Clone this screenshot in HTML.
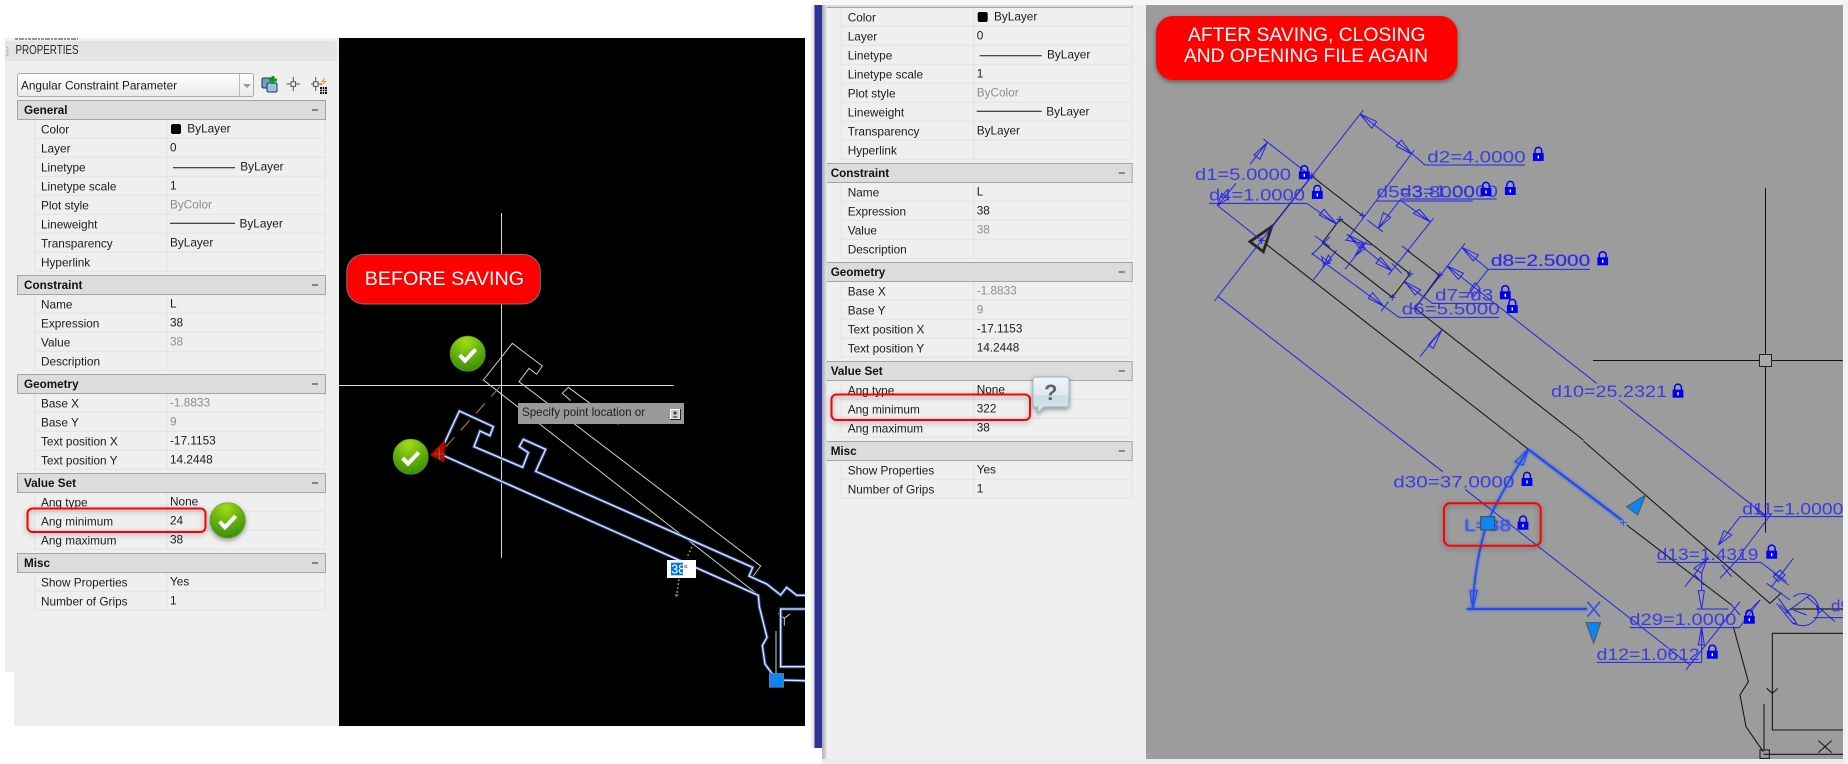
<!DOCTYPE html>
<html><head><meta charset="utf-8"><title>Before and after saving</title>
<style>
html,body{margin:0;padding:0;background:#fff;width:1848px;height:764px;overflow:hidden}
svg{display:block;position:absolute;left:0;top:0}
text{font-family:"Liberation Sans",sans-serif}
.l,.v{font-size:11.8px;fill:#1c1c1c}
.g{font-size:11.8px;fill:#8c8c8c}
.h{font-size:11.7px;font-weight:bold;fill:#111}
.t{font-size:17px;fill:#2b2bee;fill-opacity:.85}
.hd{fill:#dcdcdc;stroke:#a4a4a4;stroke-width:1}
.sep{stroke:#e2e2e2;stroke-width:1;fill:none}
.bl{fill:none;stroke:#2323e6;stroke-width:3}
.bk{fill:none;stroke:#151515;stroke-width:3.2}
</style></head><body>
<svg width="1848" height="764" viewBox="0 0 1848 764" xmlns="http://www.w3.org/2000/svg">
<defs>
<radialGradient id="gr" cx="45%" cy="15%" r="90%"><stop offset="0" stop-color="#a2dc14"/><stop offset=".55" stop-color="#5fae0c"/><stop offset="1" stop-color="#358a04"/></radialGradient>
<linearGradient id="cb" x1="0" y1="0" x2="0" y2="1"><stop offset="0" stop-color="#fff"/><stop offset="1" stop-color="#e9e9e9"/></linearGradient>
<linearGradient id="bb" x1="0" y1="0" x2="0" y2="1"><stop offset="0" stop-color="#eef4f8"/><stop offset=".5" stop-color="#dfe9ef"/><stop offset=".52" stop-color="#cadce6"/><stop offset="1" stop-color="#d8e6ee"/></linearGradient>
<linearGradient id="sl" x1="0" y1="0" x2="1" y2="0"><stop offset="0" stop-color="#a9a9a9"/><stop offset="1" stop-color="#efefef"/></linearGradient>
<linearGradient id="sr" x1="0" y1="0" x2="1" y2="0"><stop offset="0" stop-color="#fff"/><stop offset="1" stop-color="#d6d6d6"/></linearGradient>
<filter id="sh" x="-30%" y="-60%" width="160%" height="220%"><feDropShadow dx="0" dy="1.5" stdDeviation="3" flood-color="#000" flood-opacity=".38"/></filter>
<filter id="sh2" x="-30%" y="-30%" width="160%" height="170%"><feDropShadow dx="0" dy="2" stdDeviation="2.5" flood-color="#000" flood-opacity=".4"/></filter>
<filter id="gl" x="-20%" y="-20%" width="140%" height="140%"><feGaussianBlur stdDeviation="1.2" result="b"/><feMerge><feMergeNode in="b"/><feMergeNode in="SourceGraphic"/></feMerge></filter>
<filter id="bl1" x="-20%" y="-20%" width="140%" height="140%"><feGaussianBlur stdDeviation="1"/></filter>
<clipPath id="cpL"><rect x="339" y="38" width="466" height="688"/></clipPath>
<clipPath id="cpR"><rect x="826.7" y="5" width="320" height="754"/></clipPath>
<clipPath id="cpC"><rect x="1146" y="5" width="697" height="754"/></clipPath>
<g id="chk"><circle r="17.6" fill="url(#gr)" stroke="#5c9c1e" stroke-width=".6"/><path d="M-8,1.3 L-2.7,7 L8,-4.3" fill="none" stroke="#fff" stroke-width="4"/></g>
<g id="lk"><path d="M-3.4,-.5 V-3.2 A3.4,3.4 0 0 1 3.4,-3.2 V-.5" fill="none" stroke="#0000ee" stroke-width="1.5"/><rect x="-5.4" y="-1" width="10.8" height="8" fill="#0000ee"/><rect x="-.7" y="1.5" width="1.4" height="3" fill="#fff"/></g>
</defs>

<!-- LEFT PANEL -->
<rect x="5" y="38" width="334" height="634" fill="#efefef"/>
<rect x="14" y="672" width="325" height="54" fill="#efefef"/>
<path d="M5,41 H335 L337,44 V61 H5 Z" fill="#e4e4e4"/>
<line x1="15" x2="78" y1="39" y2="39" stroke="#777" stroke-width="1.5" stroke-dasharray="3 1 5 1 2 1"/>
<line x1="7.5" x2="7.5" y1="47" y2="56" stroke="#aaa" stroke-width="2" stroke-dasharray="1 1"/>
<text x="15.5" y="54" font-size="12.6" fill="#2c2c2c" textLength="63" lengthAdjust="spacingAndGlyphs">PROPERTIES</text>
<rect x="17.5" y="73.5" width="236" height="23" rx="2" fill="url(#cb)" stroke="#aaa"/>
<line x1="239.5" x2="239.5" y1="74" y2="96" stroke="#bbb"/>
<path d="M243,84 H251 L247,88 Z" fill="#999"/>
<text x="21" y="89.3" class="l">Angular Constraint Parameter</text>
<!-- toolbar icons -->
<rect x="262" y="78" width="10" height="10" rx="1.5" fill="#6f9fd2" stroke="#234" stroke-width="1"/>
<rect x="267" y="83" width="10" height="9" rx="1.5" fill="#9cc0e4" stroke="#234" stroke-width="1"/>
<path d="M273,76 V84 M269,80 H277" stroke="#0a9c1c" stroke-width="3"/>
<path d="M293.3,77 V91 M286.5,84 H300" stroke="#555" stroke-width="1"/><rect x="291" y="81.8" width="4.6" height="4.6" fill="#efefef" stroke="#555"/>
<path d="M315.7,77 V91 M311,84 H322" stroke="#555" stroke-width="1"/><rect x="313.4" y="81.8" width="4.6" height="4.6" fill="#efefef" stroke="#555"/>
<path d="M325,77 L321,82 H324 L321,86 L327,81 H324 Z" fill="#e9a020"/>
<rect x="320" y="87" width="7" height="7" fill="#111"/><path d="M320,89.3 H327 M320,91.6 H327 M322.3,87 V94 M324.6,87 V94" stroke="#efefef" stroke-width=".7"/>

<!-- left panel rows -->
<g>
<path class="sep" d="M34.7,120 V271.3 H325 V120 M167,120 V271.3 M34.7,138.3 H325 M34.7,157.3 H325 M34.7,176.3 H325 M34.7,195.3 H325 M34.7,214.3 H325 M34.7,233.3 H325 M34.7,252.3 H325"/>
<path class="sep" d="M34.7,294.3 V370.3 H325 V294.3 M167,294.3 V370.3 M34.7,313.3 H325 M34.7,332.3 H325 M34.7,351.3 H325"/>
<path class="sep" d="M34.7,393.3 V469.3 H325 V393.3 M167,393.3 V469.3 M34.7,412.3 H325 M34.7,431.3 H325 M34.7,450.3 H325"/>
<path class="sep" d="M34.7,492.3 V549.3 H325 V492.3 M167,492.3 V549.3 M34.7,511.3 H325 M34.7,530.3 H325"/>
<path class="sep" d="M34.7,572.3 V610.3 H325 V572.3 M167,572.3 V610.3 M34.7,591.3 H325"/>
<rect class="hd" x="17.5" y="100.5" width="308" height="19"/><rect class="hd" x="17.5" y="275.5" width="308" height="19"/><rect class="hd" x="17.5" y="374.5" width="308" height="19"/><rect class="hd" x="17.5" y="473.5" width="308" height="19"/><rect class="hd" x="17.5" y="553.5" width="308" height="19"/>
<path d="M312,110 h6 M312,285 h6 M312,384 h6 M312,483 h6 M312,563 h6" stroke="#666" stroke-width="1.6"/>
<text class="h" x="24" y="114">General</text><text class="h" x="24" y="289">Constraint</text><text class="h" x="24" y="388">Geometry</text><text class="h" x="24" y="487">Value Set</text><text class="h" x="24" y="567">Misc</text>
<text class="l" x="41" y="133.3">Color</text><text class="l" x="41" y="152.3">Layer</text><text class="l" x="41" y="171.3">Linetype</text><text class="l" x="41" y="190.3">Linetype scale</text><text class="l" x="41" y="209.3">Plot style</text><text class="l" x="41" y="228.3">Lineweight</text><text class="l" x="41" y="247.3">Transparency</text><text class="l" x="41" y="266.3">Hyperlink</text>
<rect x="171" y="124" width="10" height="10" rx="2" fill="#000"/>
<text class="v" x="187.3" y="132.7">ByLayer</text><text class="v" x="170" y="151.7">0</text><line x1="173" x2="235" y1="167.7" y2="167.7" stroke="#111"/><text class="v" x="240.3" y="170.7">ByLayer</text><text class="v" x="170" y="189.7">1</text><text class="g" x="170" y="208.7">ByColor</text><line x1="170" x2="235" y1="223.3" y2="223.3" stroke="#111"/><text class="v" x="239.5" y="227.7">ByLayer</text><text class="v" x="170" y="246.7">ByLayer</text>
<text class="l" x="41" y="308.3">Name</text><text class="l" x="41" y="327.3">Expression</text><text class="l" x="41" y="346.3">Value</text><text class="l" x="41" y="365.3">Description</text>
<text class="v" x="170" y="307.7">L</text><text class="v" x="170" y="326.7">38</text><text class="g" x="170" y="345.7">38</text>
<text class="l" x="41" y="407.3">Base X</text><text class="l" x="41" y="426.3">Base Y</text><text class="l" x="41" y="445.3">Text position X</text><text class="l" x="41" y="464.3">Text position Y</text>
<text class="g" x="170" y="406.7">-1.8833</text><text class="g" x="170" y="425.7">9</text><text class="v" x="170" y="444.7">-17.1153</text><text class="v" x="170" y="463.7">14.2448</text>
<text class="l" x="41" y="506.3">Ang type</text><text class="l" x="41" y="525.3">Ang minimum</text><text class="l" x="41" y="544.3">Ang maximum</text>
<text class="v" x="170" y="505.7">None</text><text class="v" x="170" y="524.7">24</text><text class="v" x="170" y="543.7">38</text>
<text class="l" x="41" y="586.3">Show Properties</text><text class="l" x="41" y="605.3">Number of Grips</text>
<text class="v" x="170" y="585.7">Yes</text><text class="v" x="170" y="604.7">1</text>
</g>
<rect x="27.5" y="508.5" width="178" height="23.5" rx="5" fill="none" stroke="#f00" stroke-width="2" filter="url(#sh)"/>
<use href="#chk" x="227.7" y="520.3" filter="url(#sh2)"/>

<!-- BLACK CANVAS -->
<rect x="339" y="38" width="466" height="688" fill="#000"/>
<g clip-path="url(#cpL)">
<line x1="501.5" x2="501.5" y1="213" y2="557.7" stroke="#ddd" stroke-width="1"/>
<line x1="339" x2="673.7" y1="385.5" y2="385.5" stroke="#ddd" stroke-width="1"/>
<g transform="translate(340,230) scale(.33333)">
<g fill="none" stroke="#cfcfcf" stroke-width="3">
<path d="M1255,1095 L430,450 L517,340 L607,408 L590,433 L567,415 L537,455 L1262,1008 L1240,1038"/>
<path d="M692,512 L667,490 L685,472 L835,583"/>
<path d="M1315,1150 L1333,1165 L1350,1152 M1333,1165 V1187 M1308,1203 V1330"/>
</g>
<g fill="none" stroke="#29488f" stroke-width="10" stroke-linejoin="miter">
<path d="M313,640 L358,543 L460,590 L450,617 L420,603 L402,650 L548,712 L565,668 L538,650 L550,628 L617,658 L587,724 L1238,1012 L1227,1038 L1280,1062 L1322,1095 L1340,1072 L1370,1096 L1395,1096"/>
<path d="M313,678 L1255,1096 L1258,1130 L1281,1222 L1267,1247 L1275,1302 L1310,1350 L1395,1352"/>
<path d="M1400,1137 H1322 V1310 H1400"/>
</g>
<g fill="none" stroke="#dfe7fb" stroke-width="4">
<path d="M313,640 L358,543 L460,590 L450,617 L420,603 L402,650 L548,712 L565,668 L538,650 L550,628 L617,658 L587,724 L1238,1012 L1227,1038 L1280,1062 L1322,1095 L1340,1072 L1370,1096 L1395,1096"/>
<path d="M313,678 L1255,1096 L1258,1130 L1281,1222 L1267,1247 L1275,1302 L1310,1350 L1395,1352"/>
<path d="M1400,1137 H1322 V1310 H1400"/>
</g>
<path d="M270,675 L315,630 L313,697 Z" fill="#c40000"/>
<path d="M480,470 L298,672" stroke="#c48a00" stroke-width="3" stroke-dasharray="40 28" fill="none"/>
<path d="M298,655 V690 M282,672 H316" stroke="#3f9a1c" stroke-width="2.5"/>
<rect x="1288" y="1330" width="43" height="42" fill="#0a86f5" stroke="#777" stroke-width="2"/>
<path d="M1060,940 L1040,985 M1017,1048 L1010,1096" stroke="#aaa" stroke-width="4" stroke-dasharray="5 7" fill="none"/>
<rect x="1005" y="1092" width="10" height="8" fill="#666"/>
</g>
<rect x="518" y="403" width="166" height="21" fill="#999"/>
<text x="522" y="416" font-size="11.6" fill="#222">Specify point location or</text>
<rect x="670.5" y="409.5" width="9.5" height="9.5" fill="#ccc" stroke="#fff"/><path d="M670,419.5 H680.5 V409" stroke="#224" fill="none"/><path d="M675,411 V415 M673,413 H677 M673,417 H677" stroke="#222" stroke-width="1"/>
<rect x="667" y="560" width="29" height="18" fill="#fff"/>
<rect x="671" y="562.7" width="12" height="12.6" fill="#0078d7"/>
<text x="671.3" y="573.5" font-size="12.5" fill="#fff">38</text>
<text x="683.5" y="573" font-size="11" fill="#e01040">°</text>
</g>
<use href="#chk" x="467.7" y="353.7"/>
<use href="#chk" x="410.7" y="456.7"/>
<rect x="346.8" y="254.5" width="193.5" height="49.5" rx="17" fill="#f00" stroke="#777" stroke-width="1"/>
<text x="364.7" y="285" font-size="19.7" fill="#fff">BEFORE SAVING</text>

<!-- RIGHT FRAME -->
<rect x="810" y="5" width="5" height="743" fill="url(#sr)"/>
<rect x="814.5" y="5" width="7.8" height="743" fill="#2f3596"/>
<rect x="822.3" y="5" width="324" height="754" fill="#efefef"/>
<rect x="822.3" y="5" width="5" height="754" fill="url(#sl)"/>
<rect x="822" y="759" width="1026" height="5" fill="#ececec"/>
<rect x="822" y="0" width="1026" height="5" fill="#f6f6f6"/>
<rect x="1843" y="0" width="5" height="764" fill="#f2f2f2"/>

<g clip-path="url(#cpR)"><g transform="translate(806.7,-112)">
<path class="sep" d="M34.7,120 V271.3 H325 V120 M167,120 V271.3 M34.7,138.3 H325 M34.7,157.3 H325 M34.7,176.3 H325 M34.7,195.3 H325 M34.7,214.3 H325 M34.7,233.3 H325 M34.7,252.3 H325"/>
<path class="sep" d="M34.7,294.3 V370.3 H325 V294.3 M167,294.3 V370.3 M34.7,313.3 H325 M34.7,332.3 H325 M34.7,351.3 H325"/>
<path class="sep" d="M34.7,393.3 V469.3 H325 V393.3 M167,393.3 V469.3 M34.7,412.3 H325 M34.7,431.3 H325 M34.7,450.3 H325"/>
<path class="sep" d="M34.7,492.3 V549.3 H325 V492.3 M167,492.3 V549.3 M34.7,511.3 H325 M34.7,530.3 H325"/>
<path class="sep" d="M34.7,572.3 V610.3 H325 V572.3 M167,572.3 V610.3 M34.7,591.3 H325"/>
<rect class="hd" x="17.5" y="100.5" width="308" height="19"/><rect class="hd" x="17.5" y="275.5" width="308" height="19"/><rect class="hd" x="17.5" y="374.5" width="308" height="19"/><rect class="hd" x="17.5" y="473.5" width="308" height="19"/><rect class="hd" x="17.5" y="553.5" width="308" height="19"/>
<path d="M312,285 h6 M312,384 h6 M312,483 h6 M312,563 h6" stroke="#666" stroke-width="1.6"/>
<text class="h" x="24" y="289">Constraint</text><text class="h" x="24" y="388">Geometry</text><text class="h" x="24" y="487">Value Set</text><text class="h" x="24" y="567">Misc</text>
<text class="l" x="41" y="133.3">Color</text><text class="l" x="41" y="152.3">Layer</text><text class="l" x="41" y="171.3">Linetype</text><text class="l" x="41" y="190.3">Linetype scale</text><text class="l" x="41" y="209.3">Plot style</text><text class="l" x="41" y="228.3">Lineweight</text><text class="l" x="41" y="247.3">Transparency</text><text class="l" x="41" y="266.3">Hyperlink</text>
<rect x="171" y="124" width="10" height="10" rx="2" fill="#000"/>
<text class="v" x="187.3" y="132.7">ByLayer</text><text class="v" x="170" y="151.7">0</text><line x1="173" x2="235" y1="167.7" y2="167.7" stroke="#111"/><text class="v" x="240.3" y="170.7">ByLayer</text><text class="v" x="170" y="189.7">1</text><text class="g" x="170" y="208.7">ByColor</text><line x1="170" x2="235" y1="223.3" y2="223.3" stroke="#111"/><text class="v" x="239.5" y="227.7">ByLayer</text><text class="v" x="170" y="246.7">ByLayer</text>
<text class="l" x="41" y="308.3">Name</text><text class="l" x="41" y="327.3">Expression</text><text class="l" x="41" y="346.3">Value</text><text class="l" x="41" y="365.3">Description</text>
<text class="v" x="170" y="307.7">L</text><text class="v" x="170" y="326.7">38</text><text class="g" x="170" y="345.7">38</text>
<text class="l" x="41" y="407.3">Base X</text><text class="l" x="41" y="426.3">Base Y</text><text class="l" x="41" y="445.3">Text position X</text><text class="l" x="41" y="464.3">Text position Y</text>
<text class="g" x="170" y="406.7">-1.8833</text><text class="g" x="170" y="425.7">9</text><text class="v" x="170" y="444.7">-17.1153</text><text class="v" x="170" y="463.7">14.2448</text>
<text class="l" x="41" y="506.3">Ang type</text><text class="l" x="41" y="525.3">Ang minimum</text><text class="l" x="41" y="544.3">Ang maximum</text>
<text class="v" x="170" y="505.7">None</text><text class="v" x="170" y="524.7">322</text><text class="v" x="170" y="543.7">38</text>
<text class="l" x="41" y="586.3">Show Properties</text><text class="l" x="41" y="605.3">Number of Grips</text>
<text class="v" x="170" y="585.7">Yes</text><text class="v" x="170" y="604.7">1</text>
</g></g>
<rect x="831.5" y="394.5" width="198.5" height="25.5" rx="5" fill="none" stroke="#f00" stroke-width="2" filter="url(#sh)"/>
<path d="M1036,377 H1066 Q1069,377 1069,380 V404 Q1069,407 1066,407 H1044 L1037.5,413 L1038,407 H1036 Q1033,407 1033,404 V380 Q1033,377 1036,377 Z" fill="url(#bb)" stroke="#9db4c2" filter="url(#sh2)"/>
<text x="1044" y="400" font-size="22" font-weight="bold" fill="#5a6672">?</text>

<!-- GRAY CANVAS -->
<rect x="1146" y="5" width="697" height="754" fill="#9c9c9c"/>
<g clip-path="url(#cpC)">
<!-- crosshair -->
<path d="M1765.5,188 V532.7 M1593,360.5 H1843" stroke="#111" stroke-width="1" fill="none"/>
<rect x="1759.5" y="354.5" width="12" height="12" fill="#aaa" stroke="#222"/>
<!-- Zone 1 -->
<g transform="translate(1180,100) scale(.33333)">
<path class="bk" d="M275,380 L395,228 L545,345"/>
<path class="bk" d="M480,358 L427,428 L637,592 L690,522 L480,358"/>
<path class="bk" d="M680,450 L778,525 L705,625 L1210,1020"/>
<path class="bk" d="M255,430 L1010,1020"/>
<path d="M210,425 L275,380 L250,455 Z" fill="none" stroke="#333" stroke-width="9" filter="url(#bl1)"/>
<path d="M210,425 L275,380 L250,455 Z" fill="none" stroke="#222" stroke-width="4"/>
<path class="bl" d="M103,603 L550,30"/>
<path class="bl" d="M540,42 L695,160 L735,195 H1035"/>
<path class="bl" d="M703,150 L500,420"/>
<path class="bl" d="M540,42 L590,65 L575,85 Z M695,162 L648,138 L664,120 Z"/>
<path class="bl" d="M250,117 L398,232 M262,127 L210,193 M262,127 L222,165 L240,178 Z M168,250 L112,318 L125,280 L145,295 L112,318"/>
<path class="bl" d="M87,310 H380 L470,372 L418,345 L432,328 L470,372"/>
<path class="bl" d="M112,316 L245,422"/>
<path class="bl" d="M590,303 H878 M660,297 H950 M660,300 L595,385 L610,338 L632,352 L595,385 M660,300 L750,365 L700,340 L718,328 L750,365 M760,355 L625,525 M562,360 L608,395"/>
<path class="bl" d="M500,402 L635,512 L588,490 L602,472 L635,512 M505,405 L555,430 L540,445 Z M495,508 L560,425 M525,468 L545,430 L555,445 Z M495,420 L578,435"/>
<path class="bl" d="M405,408 L450,440 M395,465 L450,410 M400,540 L470,450 M430,498 L445,465 L455,480 Z M430,490 L425,470 L450,490 Z"/>
<path class="bl" d="M395,460 L657,652 H957 M610,618 L565,595 L578,578 Z M603,634 L625,605 M635,490 L665,520 M665,438 L690,455"/>
<path class="bl" d="M925,508 H1230 M925,508 L845,442 L895,465 L880,483 L845,442 M855,430 L705,625 M800,497 L1250,850 M800,497 L850,520 L835,538 Z M925,508 L860,590 M870,570 L885,548 L900,565 L880,590 Z"/>
<path class="bl" d="M670,545 L757,610 H940 M675,545 L722,570 L705,585 Z M720,770 L785,690 L745,735 L760,745 L785,690"/>
<path class="bl" d="M235,422 H255 M245,412 V432 M385,228 H405 M395,218 V238 M538,347 H558 M548,337 V357 M770,525 H790 M780,515 V535 M695,625 H715 M705,615 V635 M470,358 H490 M480,348 V368 M680,522 H700 M690,512 V532 M627,592 H647 M637,582 V602"/>
</g>
<!-- long lines -->
<path d="M1218.3,296.7 L1442.7,471.7" fill="none" stroke="#2323e6" stroke-width="1"/>
<path d="M1465,489.3 L1690,665" fill="none" stroke="#2323e6" stroke-width="1"/>
<path d="M1619,400 L1766.7,516.7" fill="none" stroke="#2323e6" stroke-width="1"/>

<!-- Zone 2 -->
<g transform="translate(1500,400) scale(.33333)">
<path class="bk" d="M50,120 L85,148 M380,375 L695,615 M250,123 L810,610 L845,578 M700,680 L745,845 L720,885 L738,980 L790,1055 M790,1063 H1030 M1030,700 H817 V990 H1030 M800,865 L817,880 L833,865 M817,880 V900 M792,912 V1050 M955,1022 L995,1058 M995,1022 L955,1058"/>
<rect x="780" y="1050" width="28" height="25" fill="none" stroke="#111" stroke-width="3"/>
<path d="M870,627 H1030" stroke="#444" stroke-width="5" fill="none"/>
<path class="bl" d="M470,487 H782 L860,545 M390,683 H718 L780,600 M290,787 H605 V680 M590,627 H685 M605,520 V570 M605,628 L595,572 H613 Z M605,680 L595,735 H613 Z"/>
<path class="bl" d="M720,350 H1030 M720,350 L655,435 L672,392 L695,405 L655,435 M815,340 L720,465 M620,478 L605,520 L582,505 Z M555,560 L625,470 M585,525 L612,555 M660,535 L725,465 M665,495 L695,530 M558,810 L720,605 M690,610 L720,645 M740,640 L780,600 M765,320 L800,350 L775,340 Z"/>
<path class="bl" d="M800,550 L870,600 M815,560 L880,475 M820,520 L865,555 M840,510 L855,525 L835,545 L820,530 Z M835,595 L890,670 L880,672 L830,610 M855,640 L930,585 M840,615 L885,660 M880,630 L920,645 M920,590 L1005,665 M940,653 H1030 M950,620 L968,630 L955,640 Z"/>
<path d="M880,590 A48,48 0 1 1 880,668" class="bl"/>
<circle cx="872" cy="627" r="1.5" fill="#2323e6"/>
<path d="M262,605 L300,650 M300,605 L262,650" stroke="#2a55ee" stroke-width="5" fill="none"/>
<path d="M380,320 L437,285 L413,345 Z" fill="#0a86f5" stroke="#555" stroke-width="3"/>
<path d="M258,668 H302 L281,730 Z" fill="#0a86f5" stroke="#555" stroke-width="3"/>
<path d="M360,368 H380 M370,358 V378" stroke="#2a55ee" stroke-width="3"/>
</g>
<!-- highlighted constraint -->
<g filter="url(#gl)" fill="none" stroke="#1f4cf5" stroke-width="2">
<path d="M1528.3,449.3 L1621.7,520"/>
<path d="M1466.7,609 H1587"/>
<path d="M1528.3,449.3 Q1490,510 1484,533 Q1474,570 1472.7,609" stroke-width="1.6"/>
<path d="M1528.3,449 L1515,462 L1523.3,465 Z M1472.7,609 L1470,590.7 H1477.3 Z" stroke-width="1"/>
<text x="1464" y="531" class="t" style="fill:#2a50f5;stroke:none" textLength="47" lengthAdjust="spacingAndGlyphs">L=38</text>
</g>
<rect x="1480.7" y="516.7" width="14" height="13.3" fill="#0a86f5" stroke="#444" stroke-width="1"/>
<!-- dimension labels -->
<text class="t" x="1195" y="180" textLength="96" lengthAdjust="spacingAndGlyphs">d1=5.0000</text>
<text class="t" x="1209" y="200.3" textLength="96" lengthAdjust="spacingAndGlyphs">d4=1.0000</text>
<text class="t" x="1427.3" y="162.7" textLength="98.3" lengthAdjust="spacingAndGlyphs">d2=4.0000</text>
<text class="t" x="1376.7" y="197.7" textLength="98" lengthAdjust="spacingAndGlyphs">d5=3.8000</text>
<text class="t" x="1400" y="197" textLength="98" lengthAdjust="spacingAndGlyphs">d3=1.0000</text>
<text class="t" x="1490.7" y="266" textLength="99.3" lengthAdjust="spacingAndGlyphs">d8=2.5000</text>
<text class="t" x="1491.2" y="266" textLength="99.3" lengthAdjust="spacingAndGlyphs">d8=2.5000</text>
<text class="t" x="1435" y="300.7" textLength="58.3" lengthAdjust="spacingAndGlyphs">d7=d3</text>
<text class="t" x="1401.7" y="314.3" textLength="98" lengthAdjust="spacingAndGlyphs">d6=5.5000</text>
<text class="t" x="1551" y="397" textLength="116" lengthAdjust="spacingAndGlyphs">d10=25.2321</text>
<text class="t" x="1393.3" y="487.7" textLength="121" lengthAdjust="spacingAndGlyphs">d30=37.0000</text>
<text class="t" x="1742.3" y="514.3" textLength="101" lengthAdjust="spacingAndGlyphs">d11=1.0000</text>
<text class="t" x="1656.7" y="560" textLength="101.7" lengthAdjust="spacingAndGlyphs">d13=1.4319</text>
<text class="t" x="1629.3" y="625" textLength="107" lengthAdjust="spacingAndGlyphs">d29=1.0000</text>
<text class="t" x="1596.7" y="660" textLength="103" lengthAdjust="spacingAndGlyphs">d12=1.0612</text>
<text class="t" x="1831" y="611.7">d9</text>
<!-- locks -->
<use href="#lk" x="1304.3" y="172.3"/><use href="#lk" x="1317.3" y="192"/><use href="#lk" x="1538.3" y="154"/><use href="#lk" x="1486" y="189"/><use href="#lk" x="1510.3" y="188"/><use href="#lk" x="1602.7" y="258.3"/><use href="#lk" x="1505.3" y="292.3"/><use href="#lk" x="1512.3" y="306"/><use href="#lk" x="1678" y="390.7"/><use href="#lk" x="1527" y="479"/><use href="#lk" x="1523" y="522.7"/><use href="#lk" x="1771.7" y="551.7"/><use href="#lk" x="1749.3" y="616.7"/><use href="#lk" x="1712.3" y="651.7"/>
<rect x="1444" y="503.3" width="96.7" height="42.4" rx="6" fill="none" stroke="#f00" stroke-width="2" filter="url(#sh)"/>
<rect x="1156" y="16" width="301.4" height="64" rx="17" fill="#f00" filter="url(#sh2)"/>
<text x="1188" y="41" font-size="19.1" fill="#fff" textLength="237.5" lengthAdjust="spacingAndGlyphs">AFTER SAVING, CLOSING</text>
<text x="1184" y="62" font-size="19.1" fill="#fff" textLength="244" lengthAdjust="spacingAndGlyphs">AND OPENING FILE AGAIN</text>
</g>
</svg>
</body></html>
